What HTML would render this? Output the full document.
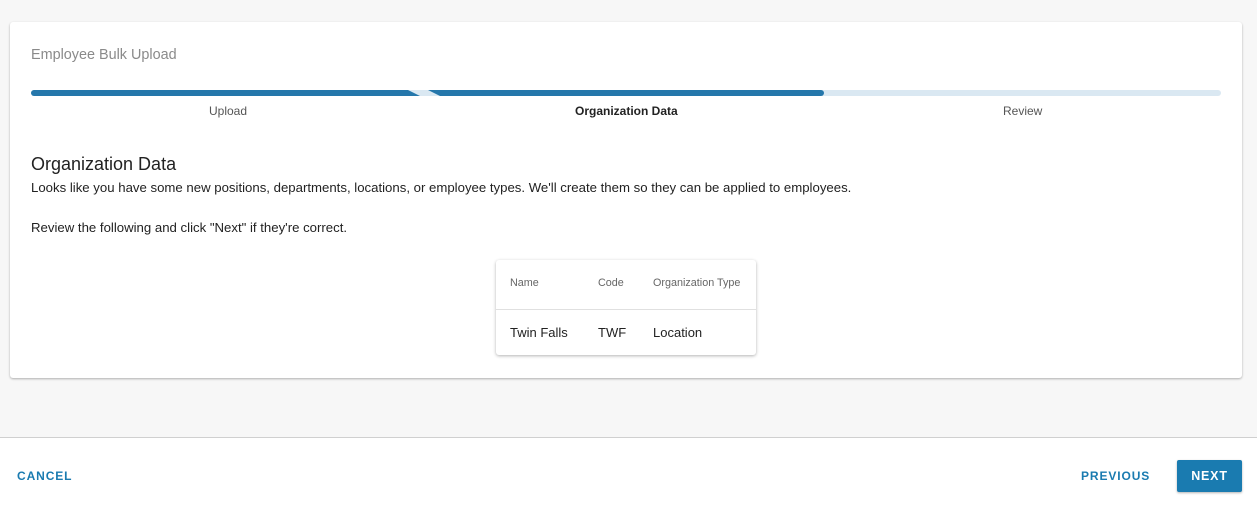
<!DOCTYPE html>
<html><head><style>
body{margin:0;width:1257px;height:520px;background:#f7f7f7;font-family:"Liberation Sans",sans-serif;position:relative;overflow:hidden}
.card{position:absolute;left:10px;top:22px;width:1232px;height:356px;background:#fff;border-radius:3px;box-shadow:0 1px 2px rgba(0,0,0,.3)}
.t{position:absolute;white-space:nowrap}
.footer{position:absolute;left:0;top:437px;width:1257px;height:83px;background:#fff;border-top:1px solid #d0d0d0}
.tbl{position:absolute;left:496px;top:260px;width:260px;height:95px;background:#fff;border-radius:3px;box-shadow:0 1px 3px rgba(0,0,0,.3)}
</style></head><body>
<div class="card">
<div class="t" style="left:21px;top:25px;font-size:14.4px;color:#8a8a8a">Employee Bulk Upload</div>
<svg style="position:absolute;left:21px;top:68px" width="1190" height="7">
<rect x="0" y="0" width="1190" height="6" rx="3" fill="#dae8f2"/>
<path d="M3 0 H377 L389 6 H3 A3 3 0 0 1 3 0Z" fill="#2577ab"/>
<path d="M397 0 H790 A3 3 0 0 1 790 6 H409 Z" fill="#2577ab"/>
</svg>
<div class="t" style="left:199px;top:82px;font-size:12px;color:#555">Upload</div>
<div class="t" style="left:565px;top:82px;font-size:12px;color:#222;font-weight:bold">Organization Data</div>
<div class="t" style="left:993px;top:82px;font-size:12px;color:#555">Review</div>
<div class="t" style="left:21px;top:132px;font-size:18px;color:#222">Organization Data</div>
<div class="t" style="left:21px;top:158px;font-size:13.2px;color:#222">Looks like you have some new positions, departments, locations, or employee types. We'll create them so they can be applied to employees.</div>
<div class="t" style="left:21px;top:198px;font-size:13.2px;color:#222">Review the following and click "Next" if they're correct.</div>
</div>
<div class="tbl">
<div class="t" style="left:14px;top:17px;font-size:10.8px;color:#666">Name</div>
<div class="t" style="left:102px;top:17px;font-size:10.8px;color:#666">Code</div>
<div class="t" style="left:157px;top:17px;font-size:10.8px;color:#666">Organization Type</div>
<div style="position:absolute;left:0;top:49px;width:260px;height:1px;background:#e0e0e0"></div>
<div class="t" style="left:14px;top:65px;font-size:13px;color:#222">Twin Falls</div>
<div class="t" style="left:102px;top:65px;font-size:13px;color:#222">TWF</div>
<div class="t" style="left:157px;top:65px;font-size:13px;color:#222">Location</div>
</div>
<div class="footer">
<div class="t" style="left:17px;top:31px;font-size:12px;color:#1a7bb0;font-weight:bold;letter-spacing:0.9px">CANCEL</div>
<div class="t" style="left:1081px;top:31px;font-size:12px;color:#1a7bb0;font-weight:bold;letter-spacing:0.9px">PREVIOUS</div>
<div style="position:absolute;left:1177px;top:22px;width:65px;height:32px;background:#1a7bb0;border-radius:2px;box-shadow:0 1px 2px rgba(0,0,0,.3);color:#fff;font-size:12.5px;font-weight:bold;letter-spacing:0.8px;text-align:center;line-height:32px">NEXT</div>
</div>
</body></html>
